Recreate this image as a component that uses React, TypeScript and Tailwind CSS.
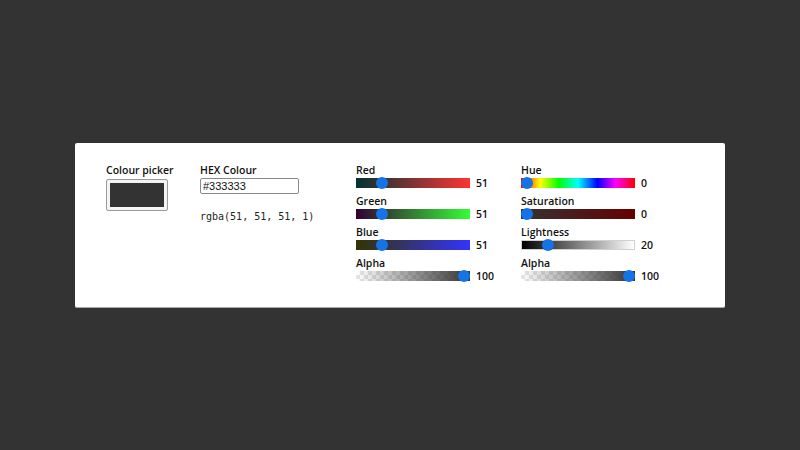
import React from "react";

type Slider = {
  label: string;
  value: number;
  max: number;
  track: string;
  checker?: boolean;
  bordered?: boolean;
};

const rgbSliders: Slider[] = [
  { label: "Red", value: 51, max: 255, track: "bg-[linear-gradient(to_right,rgb(0,51,51),rgb(255,51,51))]" },
  { label: "Green", value: 51, max: 255, track: "bg-[linear-gradient(to_right,rgb(51,0,51),rgb(51,255,51))]" },
  { label: "Blue", value: 51, max: 255, track: "bg-[linear-gradient(to_right,rgb(51,51,0),rgb(51,51,255))]" },
  { label: "Alpha", value: 100, max: 100, track: "bg-[linear-gradient(to_right,rgba(51,51,51,0),rgb(51,51,51))]", checker: true },
];

const hslSliders: Slider[] = [
  {
    label: "Hue",
    value: 0,
    max: 360,
    track:
      "bg-[linear-gradient(to_right,#ff0000,#ffff00_17%,#00ff00_33%,#00ffff_50%,#0000ff_67%,#ff00ff_83%,#ff0000)]",
  },
  { label: "Saturation", value: 0, max: 100, track: "bg-[linear-gradient(to_right,#333333,#660000)]" },
  { label: "Lightness", value: 20, max: 100, track: "bg-[linear-gradient(to_right,#000000,#808080,#ffffff)]", bordered: true },
  { label: "Alpha", value: 100, max: 100, track: "bg-[linear-gradient(to_right,rgba(51,51,51,0),rgb(51,51,51))]", checker: true },
];

const SliderRow = ({ s }: { s: Slider }) => {
  // thumb travels inside the track, 12px wide
  const left = (s.value / s.max) * (114 - 12);
  return (
    <div className="mb-[7px]">
      <div className="text-[10.5px] leading-[12px] font-semibold text-[#111]">{s.label}</div>
      <div className="mt-[2px] flex h-[10px] items-center">
        <div
          className={`relative h-[10px] w-[114px] ${s.checker ? "bg-[repeating-conic-gradient(#e6e6e6_0_25%,#ffffff_0_50%)] bg-[length:8px_8px]" : ""} ${s.bordered ? "border border-[#d0d0d0]" : ""}`}
        >
          <div className={`absolute inset-0 ${s.track}`} />
          <div
            className="absolute top-1/2 h-[12px] w-[12px] -translate-y-1/2 rounded-full bg-[#1473e6]"
            style={{ left }}
          />
        </div>
        <span className="ml-[6px] text-[10.5px] leading-[10px] font-semibold text-[#111]">{s.value}</span>
      </div>
    </div>
  );
};

const App = () => {
  return (
    <div className="flex h-[450px] w-[800px] items-start justify-center bg-[#333333] pt-[143px] font-['Open_Sans',sans-serif]">
      <div className="flex h-[165px] w-[650px] rounded-[2px] border-b border-[#aaaaaa] bg-white pl-[31px] pt-[21px]">
        {/* swatch */}
        <div className="w-[94px]">
          <div className="text-[10.5px] leading-[12px] font-semibold text-[#111]">Colour picker</div>
          <div className="mt-[3px] h-[32px] w-[62px] rounded-[2px] border border-[#9a9a9a] bg-[#f4f4f4] p-[3px]">
            <div className="h-full w-full bg-[#333333]" />
          </div>
        </div>

        {/* hex input + rgba readout */}
        <div className="w-[156px]">
          <div className="text-[10.5px] leading-[12px] font-semibold text-[#111]">HEX Colour</div>
          <input
            readOnly
            value="#333333"
            className="mt-[2px] block h-[16px] w-[99px] rounded-[2px] border border-[#8a8a8a] px-[2px] font-['Liberation_Sans',sans-serif] text-[11px] text-[#111] outline-none"
          />
          <div className="mt-[15px] font-['DejaVu_Sans_Mono',monospace] text-[10px] text-[#222]">
            rgba(51, 51, 51, 1)
          </div>
        </div>

        <div className="w-[165px]">
          {rgbSliders.map((s) => (
            <SliderRow key={s.label} s={s} />
          ))}
        </div>

        <div className="w-[165px]">
          {hslSliders.map((s) => (
            <SliderRow key={s.label} s={s} />
          ))}
        </div>
      </div>
    </div>
  );
};

export default App;
